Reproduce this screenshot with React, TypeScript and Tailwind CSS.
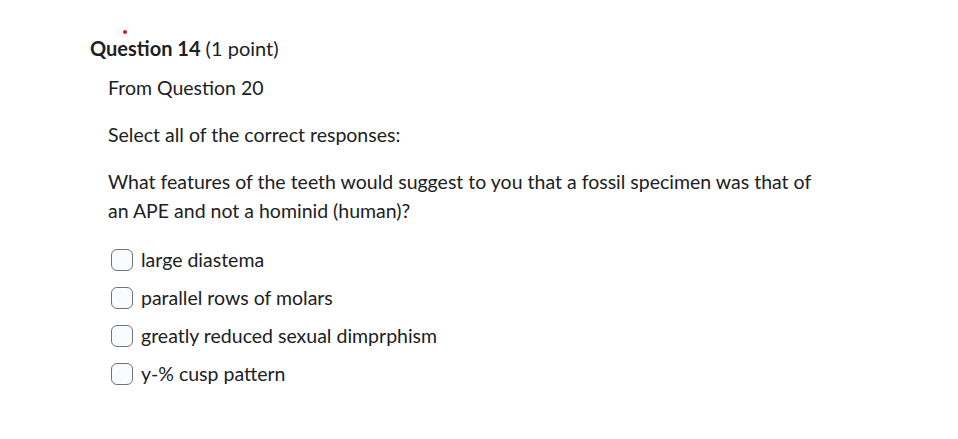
import React from "react";

const options = [
  "large diastema",
  "parallel rows of molars",
  "greatly reduced sexual dimprphism",
  "y-% cusp pattern",
];

export default function App() {
  return (
    <div className="w-[958px] h-[439px] bg-white text-[#202122] font-['Lato',sans-serif] relative">
      <div className="absolute left-[123px] top-[30px] w-[4px] h-[4px] rounded-full bg-[#e61919]" />
      <div className="pl-[90px] pt-[35px]">
        <h2 className="text-[20px] leading-[26px]">
          <span className="font-bold">Question 14</span>{" "}
          <span className="font-normal">(1 point)</span>
        </h2>
        <div className="pl-[18px] text-[19.5px] leading-[29px]">
          <p className="mt-[12px]">From Question 20</p>
          <p className="mt-[18px]">Select all of the correct responses:</p>
          <p className="mt-[18px] w-[715px]">
            What features of the teeth would suggest to you that a fossil specimen was that of an APE and not a hominid (human)?
          </p>
          <div className="mt-[24px] flex flex-col gap-[16px]">
            {options.map((o) => (
              <label key={o} className="flex items-center gap-[8px] pl-[3px] h-[22px]">
                <span className="w-[22px] h-[22px] rounded-[6px] border border-[#6e7376] bg-[#f9fbff] shrink-0" />
                <span className="leading-[22px]">{o}</span>
              </label>
            ))}
          </div>
        </div>
      </div>
    </div>
  );
}
